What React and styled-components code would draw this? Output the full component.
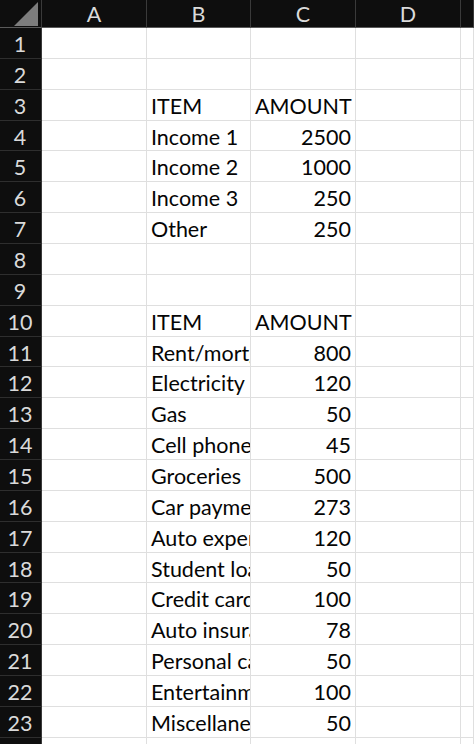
import React from "react";
import styled, { createGlobalStyle } from "styled-components";

const Global = createGlobalStyle`
  html, body { margin: 0; padding: 0; background: #ffffff; overflow: hidden; }
  #root { width: 474px; height: 744px; overflow: hidden; }
`;

const Sheet = styled.div`
  display: grid;
  grid-template-columns: 42px 105px 104px 105px 105px 1fr;
  grid-template-rows: 28px repeat(24, 30.87px);
  width: 474px;
  font-family: Lato, "Liberation Sans", sans-serif;
`;

const Corner = styled.div`
  position: relative;
  background: #0e0e0e;
  border-right: 1px solid #3a3a3a;
  border-bottom: 1px solid #5a5a5a;
  box-sizing: border-box;
`;

const ColHead = styled.div`
  background: #0e0e0e;
  color: #dadada;
  border-right: 1px solid #3a3a3a;
  border-bottom: 1px solid #5a5a5a;
  box-sizing: border-box;
  display: flex;
  align-items: center;
  justify-content: center;
  font-size: 21.5px;
  padding-top: 1px;
`;

const RowHead = styled.div`
  background: #0e0e0e;
  color: #dadada;
  border-right: 1px solid #3a3a3a;
  border-bottom: 1px solid #2e2e2e;
  box-sizing: border-box;
  display: flex;
  align-items: center;
  justify-content: center;
  font-size: 21.5px;
  padding-top: 2px;
  padding-right: 1px;
`;

const Cell = styled.div`
  border-right: 1px solid #dfdfdf;
  border-bottom: 1px solid #dfdfdf;
  box-sizing: border-box;
  display: flex;
  align-items: center;
  justify-content: ${(p) => (p.$num ? "flex-end" : "flex-start")};
  padding: 2px 4px 0 4px;
  font-size: 21.5px;
  color: #050505;
  white-space: nowrap;
  overflow: ${(p) => (p.$clip ? "hidden" : "visible")};
  min-width: 0;
`;

const income = [
  ["ITEM", "AMOUNT"],
  ["Income 1", 2500],
  ["Income 2", 1000],
  ["Income 3", 250],
  ["Other", 250],
];

const expenses = [
  ["ITEM", "AMOUNT"],
  ["Rent/mortgage", 800],
  ["Electricity", 120],
  ["Gas", 50],
  ["Cell phone", 45],
  ["Groceries", 500],
  ["Car payment", 273],
  ["Auto expenses", 120],
  ["Student loans", 50],
  ["Credit cards", 100],
  ["Auto insurance", 78],
  ["Personal care", 50],
  ["Entertainment", 100],
  ["Miscellaneous", 50],
];

function rowData(r) {
  if (r >= 3 && r <= 7) return income[r - 3];
  if (r >= 10 && r <= 23) return expenses[r - 10];
  return null;
}

export default function App() {
  const cols = ["A", "B", "C", "D", ""];
  const rows = Array.from({ length: 24 }, (_, i) => i + 1);
  return (
    <>
      <Global />
      <Sheet>
        <Corner>
          <svg width="41" height="27" style={{ position: "absolute", left: 0, top: 0 }}>
            <polygon points="14,26 38,26 38,2" fill="#7d7d7d" />
          </svg>
        </Corner>
        {cols.map((c, i) => (
          <ColHead key={"h" + i}>{c}</ColHead>
        ))}
        {rows.map((r) => {
          const d = rowData(r);
          return (
            <React.Fragment key={r}>
              <RowHead>{r}</RowHead>
              <Cell />
              <Cell $clip>{d ? d[0] : ""}</Cell>
              <Cell $num={d && typeof d[1] === "number"}>{d ? d[1] : ""}</Cell>
              <Cell />
              <Cell />
            </React.Fragment>
          );
        })}
      </Sheet>
    </>
  );
}
